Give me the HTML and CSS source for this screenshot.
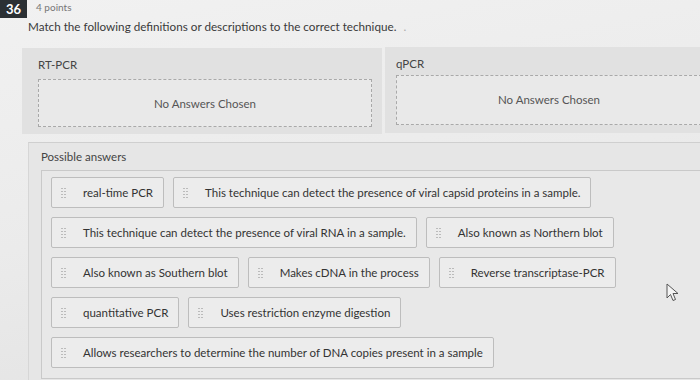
FILE: index.html
```html
<!DOCTYPE html>
<html>
<head>
<meta charset="utf-8">
<link rel="stylesheet" href="styles.css">
</head>
<body>
<div class="page">
  <div class="header">
    <div class="qnum">36</div>
    <div class="points">4 points</div>
  </div>
  <div class="prompt">Match the following definitions or descriptions to the correct technique. <span class="dot">.</span></div>

  <div class="categories">
    <div class="cat cat-left">
      <div class="cat-label">RT-PCR</div>
      <div class="drop">No Answers Chosen</div>
    </div>
    <div class="cat cat-right">
      <div class="cat-label">qPCR</div>
      <div class="drop">No Answers Chosen</div>
    </div>
  </div>

  <div class="possible">
    <div class="possible-label">Possible answers</div>
    <div class="pool">
      <div class="row">
        <div class="chip"><span class="grip"></span>real-time PCR</div>
        <div class="chip"><span class="grip"></span>This technique can detect the presence of viral capsid proteins in a sample.</div>
      </div>
      <div class="row">
        <div class="chip"><span class="grip"></span>This technique can detect the presence of viral RNA in a sample.</div>
        <div class="chip"><span class="grip"></span>Also known as Northern blot</div>
      </div>
      <div class="row">
        <div class="chip"><span class="grip"></span>Also known as Southern blot</div>
        <div class="chip"><span class="grip"></span>Makes cDNA in the process</div>
        <div class="chip"><span class="grip"></span>Reverse transcriptase-PCR</div>
      </div>
      <div class="row">
        <div class="chip"><span class="grip"></span>quantitative PCR</div>
        <div class="chip"><span class="grip"></span>Uses restriction enzyme digestion</div>
      </div>
      <div class="row">
        <div class="chip"><span class="grip"></span>Allows researchers to determine the number of DNA copies present in a sample</div>
      </div>
    </div>
  </div>

  <svg class="cursor" width="14" height="20" viewBox="0 0 14 20">
    <path d="M1 1 L1 15 L4.5 11.5 L7 17.5 L9.5 16.5 L7 10.5 L12 10.5 Z" fill="#f4f4f4" stroke="#555" stroke-width="1" stroke-linejoin="round"/>
  </svg>
</div>
</body>
</html>
```

FILE: styles.css
```css
html, body {
  margin: 0;
  padding: 0;
}
body {
  background: #ebebeb;
  font-family: Lato, "Open Sans", sans-serif;
  color: #3b3b3b;
}
.page {
  position: relative;
  width: 700px;
  height: 380px;
  overflow: hidden;
  background: linear-gradient(170deg, #f1f1f1 0%, #ebebeb 50%, #e1e1e1 100%);
}
.header {
  display: flex;
  align-items: flex-start;
}
.qnum {
  width: 27px;
  height: 18px;
  background: #2b3034;
  color: #fff;
  font-weight: 700;
  font-size: 13px;
  line-height: 18px;
  text-align: center;
}
.points {
  margin-left: 9px;
  margin-top: 1px;
  font-size: 10px;
  color: #777;
}
.prompt {
  margin-left: 28px;
  margin-top: 1px;
  font-size: 11.7px;
  color: #3a3a3a;
}
.prompt .dot {
  color: #aaa;
  margin-left: 4px;
}
.categories {
  display: flex;
  gap: 3px;
  margin-top: 15px;
  margin-left: 22px;
}
.cat {
  background: #e1e1e1;
  height: 86px;
  box-sizing: border-box;
}
.cat-left {
  width: 360px;
  padding: 10px 10px 0 16px;
}
.cat-right {
  flex: 1;
  padding: 10px 0 0 11px;
  margin-top: -1px;
}
.cat-label {
  font-size: 11.5px;
  color: #444;
  height: 16px;
}
.drop {
  margin-top: 5px;
  height: 48px;
  box-sizing: border-box;
  border: 1px dashed #a9a9a9;
  background: #e9e9e9;
  display: flex;
  align-items: center;
  justify-content: center;
  font-size: 11.5px;
  color: #555;
}
.cat-right .drop {
  margin-top: 2px;
  height: 50px;
  align-items: flex-start;
  padding-top: 17px;
  margin-right: -2px;
}
.possible {
  margin-top: 8px;
  margin-left: 28px;
  background: #e6e6e6;
  border-top: 1px solid #cfcfcf;
  border-left: 1px solid #d6d6d6;
  padding: 7px 0 0 12px;
  height: 245px;
  box-sizing: border-box;
}
.possible-label {
  font-size: 11.5px;
  color: #444;
  height: 18px;
}
.pool {
  margin-top: 2px;
  border: 1px solid #c9c9c9;
  border-right: none;
  background: #e8e8e8;
  padding: 6px 0 10px 9px;
  display: flex;
  flex-direction: column;
  gap: 9px;
}
.row {
  display: flex;
  gap: 9px;
}
.chip {
  display: flex;
  align-items: center;
  height: 31px;
  box-sizing: border-box;
  border: 1px solid #bdbdbd;
  border-radius: 2px;
  background: #ececec;
  padding: 0 10px 0 9px;
  font-size: 11.5px;
  color: #333;
  white-space: nowrap;
}
.grip {
  width: 5px;
  height: 11px;
  margin-right: 17px;
  background-image: radial-gradient(circle, #8a8a8a 0.8px, transparent 1px);
  background-size: 3px 3px;
  background-position: -0.5px 0;
  flex: none;
}
.cursor {
  position: absolute;
  left: 666px;
  top: 283px;
}
```
